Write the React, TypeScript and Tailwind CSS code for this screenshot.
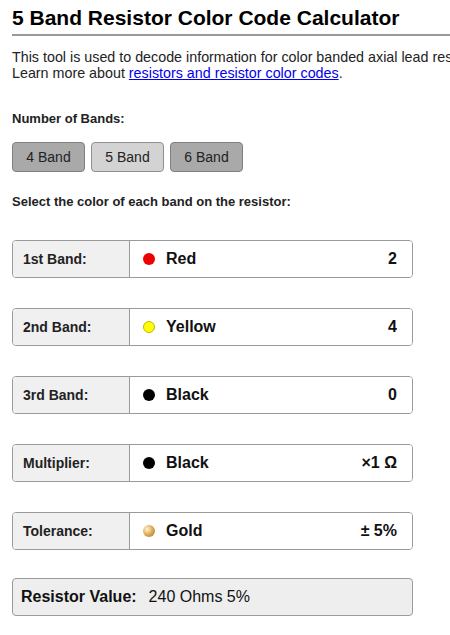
import React from "react";

const rows = [
  { label: "1st Band:", name: "Red", value: "2", dot: "bg-[#ee0000]" },
  { label: "2nd Band:", name: "Yellow", value: "4", dot: "bg-[#ffff00] border border-[#c8b400]" },
  { label: "3rd Band:", name: "Black", value: "0", dot: "bg-black" },
  { label: "Multiplier:", name: "Black", value: "×1 Ω", dot: "bg-black" },
  { label: "Tolerance:", name: "Gold", value: "± 5%", dot: "bg-[radial-gradient(circle_at_35%_35%,#fff3d0_0%,#e0b060_45%,#a07020_100%)]" },
];

export default function App() {
  return (
    <div className="w-[450px] h-[635px] overflow-hidden bg-white text-[#111] font-['Liberation_Sans',Arial,sans-serif]">
      <div className="w-[700px] pl-[12px] pt-[5px]">
        <h1 className="text-[21px] font-bold leading-[26px] text-black">5 Band Resistor Color Code Calculator</h1>
        <div className="mt-[3px] h-[2px] bg-[#999]" />
        <p className="mt-[13px] text-[14.3px] leading-[16px] whitespace-nowrap text-[#222]">
          This tool is used to decode information for color banded axial lead resistors.
          <br />
          Learn more about{" "}
          <a href="#" className="text-[#0000ee] underline">resistors and resistor color codes</a>.
        </p>
        <div className="mt-[30px] text-[13px] font-bold leading-[16px] text-[#222]">Number of Bands:</div>
        <div className="mt-[15px] flex gap-[6px]">
          <button className="w-[73px] h-[30px] rounded-[4px] border border-[#808080] bg-[#a9a9a9] text-[14px] text-[#222]">4 Band</button>
          <button className="w-[73px] h-[30px] rounded-[4px] border border-[#909090] bg-[#d3d3d3] text-[14px] text-[#222]">5 Band</button>
          <button className="w-[73px] h-[30px] rounded-[4px] border border-[#808080] bg-[#a9a9a9] text-[14px] text-[#222]">6 Band</button>
        </div>
        <div className="mt-[22px] text-[13px] font-bold leading-[16px] text-[#222]">Select the color of each band on the resistor:</div>
        <div className="mt-[30px] flex flex-col gap-[30px] w-[401px]">
          {rows.map((r) => (
            <div key={r.label} className="flex h-[38px] rounded-[4px] border border-[#9a9a9a] overflow-hidden">
              <div className="w-[117px] shrink-0 bg-[#f0f0f0] border-r border-[#9a9a9a] flex items-center pl-[10px] text-[14px] font-bold text-[#222]">
                {r.label}
              </div>
              <div className="flex-1 bg-white flex items-center pl-[13px] pr-[15px]">
                <span className={`w-[12px] h-[12px] rounded-full shrink-0 ${r.dot}`} />
                <span className="ml-[11px] text-[16px] font-bold text-[#111]">{r.name}</span>
                <span className="ml-auto text-[16px] font-bold text-[#111]">{r.value}</span>
              </div>
            </div>
          ))}
          <div className="-mt-[2px] flex items-center h-[38px] rounded-[4px] border border-[#9a9a9a] bg-[#eeeeee] pl-[8px] text-[16px] text-[#111]">
            <span className="font-bold">Resistor Value:</span>
            <span className="ml-[12px]">240 Ohms 5%</span>
          </div>
        </div>
      </div>
    </div>
  );
}
